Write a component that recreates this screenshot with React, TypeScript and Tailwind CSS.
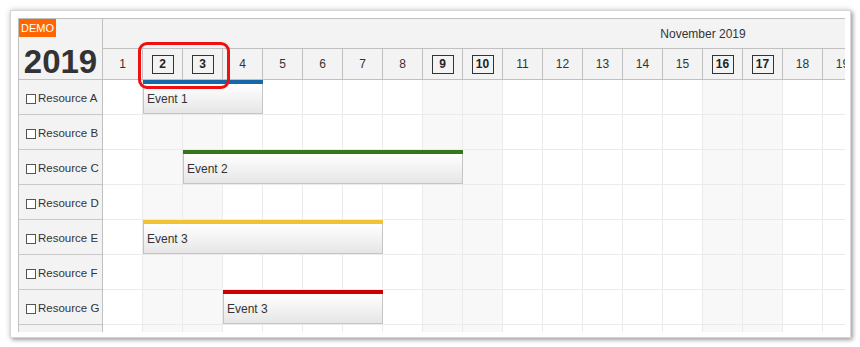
const days = Array.from({ length: 30 }, (_, i) => i + 1);
const weekends = [2, 3, 9, 10, 16, 17, 23, 24, 30];

const resources = ["A", "B", "C", "D", "E", "F", "G", "H"];

type CalEvent = {
  row: string;
  text: string;
  start: number;
  end: number;
  bar: string;
};

const events: CalEvent[] = [
  { row: "A", text: "Event 1", start: 2, end: 4, bar: "bg-[#1766a8]" },
  { row: "C", text: "Event 2", start: 3, end: 9, bar: "bg-[#38761d]" },
  { row: "E", text: "Event 3", start: 2, end: 7, bar: "bg-[#f1c232]" },
  { row: "G", text: "Event 3", start: 4, end: 7, bar: "bg-[#cc0000]" },
];

const CELL = 40;

function DayHeader({ day }: { day: number }) {
  const isWeekend = weekends.includes(day);
  return (
    <div className="w-[40px] h-full shrink-0 border-r border-[#c0c0c0] flex items-center justify-center">
      {isWeekend ? (
        <span className="w-[22px] h-[19px] border border-[#333] flex items-center justify-center font-bold text-[#222]">
          {day}
        </span>
      ) : (
        <span className="text-[#333]">{day}</span>
      )}
    </div>
  );
}

function GridRow({ id }: { id: string }) {
  const rowEvents = events.filter((e) => e.row === id);
  return (
    <div className="relative flex h-[35px] border-b border-[#ebebeb]">
      {days.map((d) => (
        <div
          key={d}
          className={`w-[40px] h-full shrink-0 border-r border-[#ebebeb] ${
            weekends.includes(d) ? "bg-[#f8f8f8]" : "bg-white"
          }`}
        />
      ))}
      {rowEvents.map((ev, i) => (
        <div
          key={i}
          className="absolute top-0 h-[34px] flex flex-col"
          style={{
            left: (ev.start - 1) * CELL,
            width: (ev.end - ev.start + 1) * CELL,
          }}
        >
          <div className={`h-[4px] ${ev.bar}`} />
          <div className="flex-1 flex items-center pl-[3px] border-x border-b border-[#c4c4c4] bg-gradient-to-b from-white to-[#e6e6e6] text-[#333]">
            {ev.text}
          </div>
        </div>
      ))}
    </div>
  );
}

export default function App() {
  return (
    <div className="w-[860px] h-[347px] bg-white pt-[10px] pl-[10px] font-['Liberation_Sans',Arial,sans-serif] text-[12px]">
      <div className="w-[841px] h-[328px] bg-white border border-[#d6d6d6] shadow-[0_0_6px_rgba(0,0,0,0.18),2px_2px_4px_rgba(0,0,0,0.3)] pt-[7px] pl-[7px]">
        <div className="relative w-[827px] h-[314px] overflow-hidden flex border-t border-l border-[#c0c0c0]">
          {/* row headers */}
          <div className="w-[84px] shrink-0 bg-[#f3f3f3] border-r border-[#c0c0c0]">
            <div className="relative h-[61px] border-b border-[#c0c0c0] flex items-end justify-center">
              <span className="absolute top-0 left-0 bg-[#ff6600] text-white text-[11px] leading-[18px] px-[2px]">
                DEMO
              </span>
              <span className="text-[33px] leading-none font-bold text-[#333] mb-[1px]">
                2019
              </span>
            </div>
            {resources.map((r) => (
              <div
                key={r}
                className="h-[35px] border-b border-[#c8c8c8] flex items-center pl-[7px] pt-[3px] gap-[2px] text-[#333] text-[11.5px]"
              >
                <span className="w-[10px] h-[10px] border border-[#555] bg-white" />
                <span>Resource {r}</span>
              </div>
            ))}
          </div>

          {/* timeline */}
          <div className="flex-1 overflow-hidden">
            <div className="w-[1200px]">
              <div className="bg-[#f3f3f3]">
                <div className="h-[30px] border-b border-[#c0c0c0] flex items-center justify-center text-[#333]">
                  November 2019
                </div>
                <div className="h-[31px] border-b border-[#c0c0c0] flex">
                  {days.map((d) => (
                    <DayHeader key={d} day={d} />
                  ))}
                </div>
              </div>
              {resources.map((r) => (
                <GridRow key={r} id={r} />
              ))}
            </div>
          </div>

          {/* highlight annotation */}
          <div className="absolute left-[119px] top-[23px] w-[92px] h-[47px] border-[3px] border-[#ee1111] rounded-[9px]" />
        </div>
      </div>
    </div>
  );
}
